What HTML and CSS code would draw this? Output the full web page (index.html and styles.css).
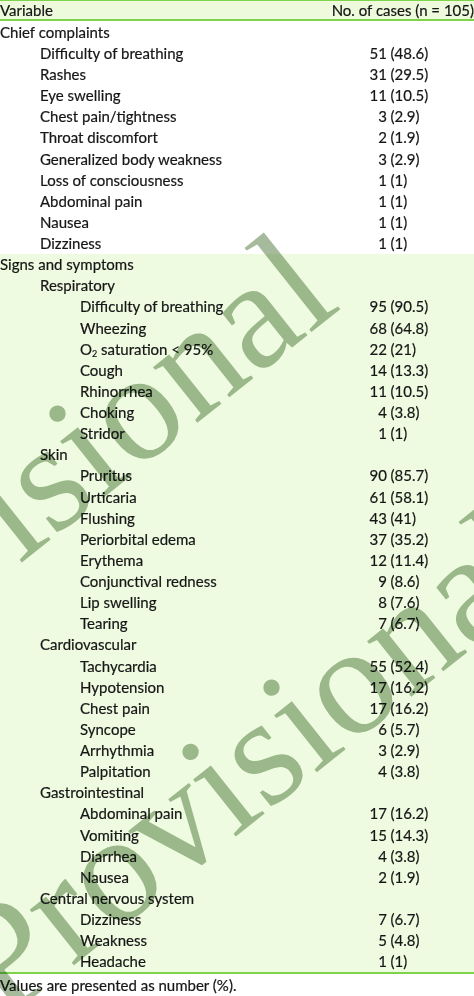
FILE: index.html
```html
<!DOCTYPE html>
<html>
<head>
<meta charset="utf-8">
<link rel="stylesheet" href="styles.css">
</head>
<body>
<div class="page">
  <div class="thead">
    <span class="hlabel">Variable</span>
    <span class="hval">No. of cases (n = 105)</span>
  </div>
  <div class="group white">
    <div class="row l0"><span class="label">Chief complaints</span></div>
    <div class="row l1"><span class="label">Difficulty of breathing</span><span class="val"><span class="n">51</span><span class="p">(48.6)</span></span></div>
    <div class="row l1"><span class="label">Rashes</span><span class="val"><span class="n">31</span><span class="p">(29.5)</span></span></div>
    <div class="row l1"><span class="label">Eye swelling</span><span class="val"><span class="n">11</span><span class="p">(10.5)</span></span></div>
    <div class="row l1"><span class="label">Chest pain/tightness</span><span class="val"><span class="n">3</span><span class="p">(2.9)</span></span></div>
    <div class="row l1"><span class="label">Throat discomfort</span><span class="val"><span class="n">2</span><span class="p">(1.9)</span></span></div>
    <div class="row l1"><span class="label">Generalized body weakness</span><span class="val"><span class="n">3</span><span class="p">(2.9)</span></span></div>
    <div class="row l1"><span class="label">Loss of consciousness</span><span class="val"><span class="n">1</span><span class="p">(1)</span></span></div>
    <div class="row l1"><span class="label">Abdominal pain</span><span class="val"><span class="n">1</span><span class="p">(1)</span></span></div>
    <div class="row l1"><span class="label">Nausea</span><span class="val"><span class="n">1</span><span class="p">(1)</span></span></div>
    <div class="row l1"><span class="label">Dizziness</span><span class="val"><span class="n">1</span><span class="p">(1)</span></span></div>
  </div>
  <div class="group green">
    <div class="row l0"><span class="label">Signs and symptoms</span></div>
    <div class="row l1"><span class="label">Respiratory</span></div>
    <div class="row l2"><span class="label">Difficulty of breathing</span><span class="val"><span class="n">95</span><span class="p">(90.5)</span></span></div>
    <div class="row l2"><span class="label">Wheezing</span><span class="val"><span class="n">68</span><span class="p">(64.8)</span></span></div>
    <div class="row l2"><span class="label">O<sub>2</sub> saturation &lt; 95%</span><span class="val"><span class="n">22</span><span class="p">(21)</span></span></div>
    <div class="row l2"><span class="label">Cough</span><span class="val"><span class="n">14</span><span class="p">(13.3)</span></span></div>
    <div class="row l2"><span class="label">Rhinorrhea</span><span class="val"><span class="n">11</span><span class="p">(10.5)</span></span></div>
    <div class="row l2"><span class="label">Choking</span><span class="val"><span class="n">4</span><span class="p">(3.8)</span></span></div>
    <div class="row l2"><span class="label">Stridor</span><span class="val"><span class="n">1</span><span class="p">(1)</span></span></div>
    <div class="row l1"><span class="label">Skin</span></div>
    <div class="row l2"><span class="label">Pruritus</span><span class="val"><span class="n">90</span><span class="p">(85.7)</span></span></div>
    <div class="row l2"><span class="label">Urticaria</span><span class="val"><span class="n">61</span><span class="p">(58.1)</span></span></div>
    <div class="row l2"><span class="label">Flushing</span><span class="val"><span class="n">43</span><span class="p">(41)</span></span></div>
    <div class="row l2"><span class="label">Periorbital edema</span><span class="val"><span class="n">37</span><span class="p">(35.2)</span></span></div>
    <div class="row l2"><span class="label">Erythema</span><span class="val"><span class="n">12</span><span class="p">(11.4)</span></span></div>
    <div class="row l2"><span class="label">Conjunctival redness</span><span class="val"><span class="n">9</span><span class="p">(8.6)</span></span></div>
    <div class="row l2"><span class="label">Lip swelling</span><span class="val"><span class="n">8</span><span class="p">(7.6)</span></span></div>
    <div class="row l2"><span class="label">Tearing</span><span class="val"><span class="n">7</span><span class="p">(6.7)</span></span></div>
    <div class="row l1"><span class="label">Cardiovascular</span></div>
    <div class="row l2"><span class="label">Tachycardia</span><span class="val"><span class="n">55</span><span class="p">(52.4)</span></span></div>
    <div class="row l2"><span class="label">Hypotension</span><span class="val"><span class="n">17</span><span class="p">(16.2)</span></span></div>
    <div class="row l2"><span class="label">Chest pain</span><span class="val"><span class="n">17</span><span class="p">(16.2)</span></span></div>
    <div class="row l2"><span class="label">Syncope</span><span class="val"><span class="n">6</span><span class="p">(5.7)</span></span></div>
    <div class="row l2"><span class="label">Arrhythmia</span><span class="val"><span class="n">3</span><span class="p">(2.9)</span></span></div>
    <div class="row l2"><span class="label">Palpitation</span><span class="val"><span class="n">4</span><span class="p">(3.8)</span></span></div>
    <div class="row l1"><span class="label">Gastrointestinal</span></div>
    <div class="row l2"><span class="label">Abdominal pain</span><span class="val"><span class="n">17</span><span class="p">(16.2)</span></span></div>
    <div class="row l2"><span class="label">Vomiting</span><span class="val"><span class="n">15</span><span class="p">(14.3)</span></span></div>
    <div class="row l2"><span class="label">Diarrhea</span><span class="val"><span class="n">4</span><span class="p">(3.8)</span></span></div>
    <div class="row l2"><span class="label">Nausea</span><span class="val"><span class="n">2</span><span class="p">(1.9)</span></span></div>
    <div class="row l1"><span class="label">Central nervous system</span></div>
    <div class="row l2"><span class="label">Dizziness</span><span class="val"><span class="n">7</span><span class="p">(6.7)</span></span></div>
    <div class="row l2"><span class="label">Weakness</span><span class="val"><span class="n">5</span><span class="p">(4.8)</span></span></div>
    <div class="row l2"><span class="label">Headache</span><span class="val"><span class="n">1</span><span class="p">(1)</span></span></div>
  </div>
  <div class="foot">Values are presented as number (%).</div>
  <div class="wm wm1">Provisional</div>
  <div class="wm wm2">Provisional</div>
</div>
</body>
</html>
```
FILE: styles.css
```css
html, body {
  margin: 0;
  padding: 0;
  background: #ffffff;
}
.page {
  position: relative;
  width: 474px;
  height: 996px;
  overflow: hidden;
  font-family: "Lato", "Liberation Sans", sans-serif;
  font-size: 15px;
  color: #161616;
  -webkit-text-stroke: 0.2px #161616;
}
.thead {
  display: flex;
  justify-content: space-between;
  align-items: center;
  height: 18.3px;
  background: #eefadc;
  border-top: 1px solid #7fd34b;
  border-bottom: 2px solid #7fd34b;
}
.hlabel { padding-left: 0; }
.hval { margin-right: 0; white-space: nowrap; }
.group.white { background: #ffffff; }
.group.green { background: #effbe1; }
.row {
  display: grid;
  grid-template-columns: 1fr 147px;
  align-items: center;
  height: 21.13px;
  white-space: nowrap;
}
.l0 .label { padding-left: 0; }
.l1 .label { padding-left: 40px; }
.l2 .label { padding-left: 80px; }
.label sub {
  font-size: 9px;
  vertical-align: baseline;
  position: relative;
  top: 2px;
}
.val {
  display: flex;
  align-items: baseline;
}
.val .n {
  width: 60px;
  text-align: right;
}
.val .p {
  padding-left: 3.5px;
}
.foot {
  border-top: 2px solid #7fd34b;
  height: 21.7px;
  display: flex;
  align-items: center;
}
.wm {
  position: absolute;
  font-family: "Liberation Serif", "DejaVu Serif", serif;
  font-size: 155px;
  line-height: 1;
  color: #a6bb9c;
  -webkit-text-stroke: 0;
  white-space: nowrap;
  transform-origin: 0 50%;
  transform: rotate(-38.5deg);
  mix-blend-mode: multiply;
  pointer-events: none;
}
.wm1 { left: -28px; top: 903px; }
.wm2 { left: -242px; top: 629px; }
```
